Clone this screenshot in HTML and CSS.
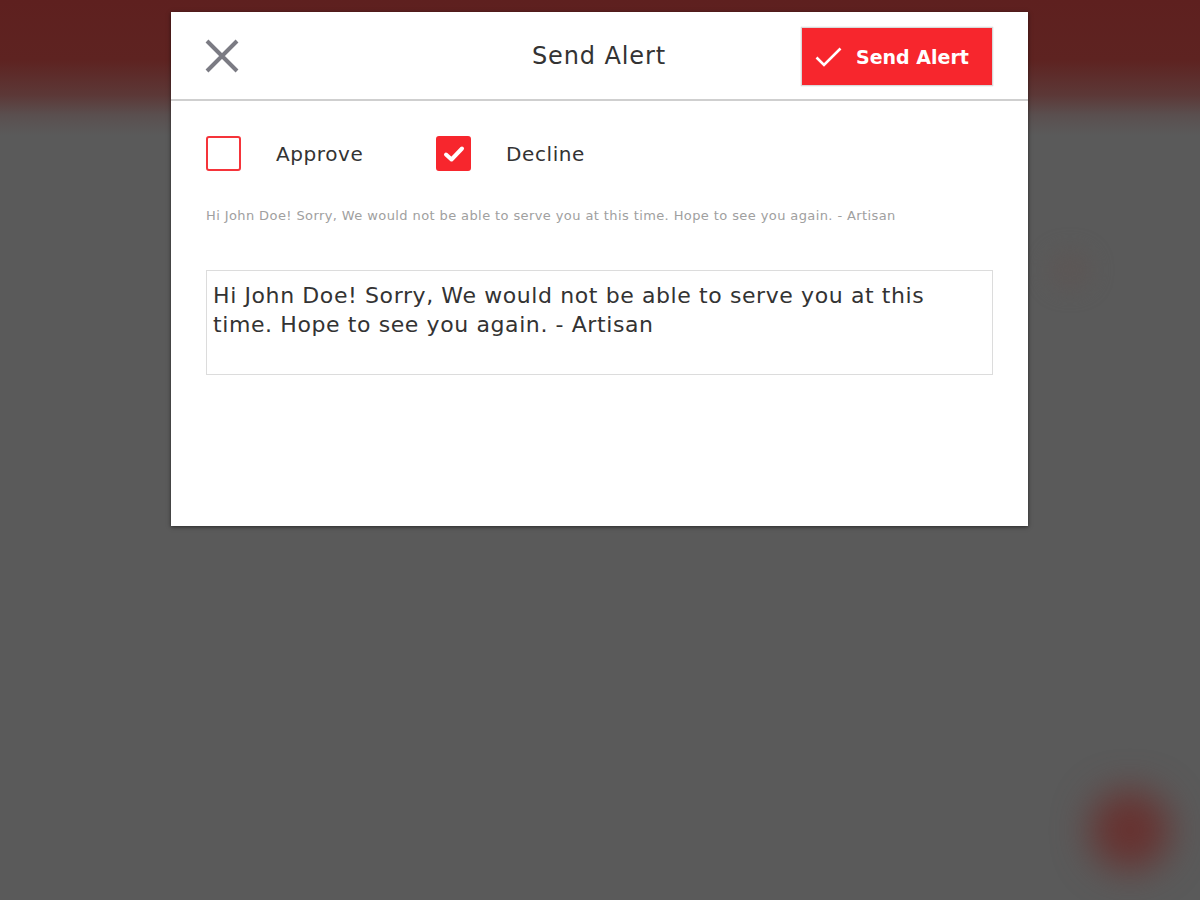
FILE: index.html
```html
<!DOCTYPE html>
<html>
<head>
<meta charset="utf-8">
<link rel="stylesheet" href="styles.css">
</head>
<body>
<div class="backdrop">
  <div class="blob blob-a"></div>
  <div class="blob blob-b"></div>
  <div class="modal">
    <div class="modal-header">
      <button class="close" aria-label="Close">
        <svg width="34" height="34" viewBox="0 0 34 34"><path d="M2 2 L32 32 M32 2 L2 32" stroke="#7b7b83" stroke-width="4" stroke-linecap="butt"/></svg>
      </button>
      <div class="title">Send Alert</div>
      <button class="send">
        <svg width="27" height="22" viewBox="0 0 27 22"><path d="M1.5 11.5 L9 19 L25.5 2.5" fill="none" stroke="#fff" stroke-width="2.6"/></svg>
        <span>Send Alert</span>
      </button>
    </div>
    <div class="modal-body">
      <div class="options">
        <label class="option">
          <span class="box"></span>
          <span class="opt-label">Approve</span>
        </label>
        <label class="option">
          <span class="box checked">
            <svg width="22" height="18" viewBox="0 0 22 18"><path d="M3 9.5 L8.5 14.5 L19 3.5" fill="none" stroke="#fff" stroke-width="4" stroke-linejoin="round" stroke-linecap="round"/></svg>
          </span>
          <span class="opt-label">Decline</span>
        </label>
      </div>
      <p class="preview">Hi John Doe! Sorry, We would not be able to serve you at this time. Hope to see you again. - Artisan</p>
      <div class="message">Hi John Doe! Sorry, We would not be able to serve you at this time. Hope to see you again. - Artisan</div>
    </div>
  </div>
</div>
</body>
</html>
```

FILE: styles.css
```css
* { box-sizing: border-box; }
html, body { margin: 0; padding: 0; }
body {
  font-family: "DejaVu Sans", "Open Sans", sans-serif;
  background: #5a5a5a;
}
.backdrop {
  position: relative;
  width: 1200px;
  height: 900px;
  overflow: hidden;
  padding-top: 12px;
  background: linear-gradient(180deg, #5e201f 0px, #5e2321 60px, #5c3837 95px, #5a4f4f 115px, #5a5a5a 135px, #5a5a5a 100%);
}
.blob {
  position: absolute;
  border-radius: 50%;
  filter: blur(18px);
}
.blob-a {
  left: 1090px; top: 790px; width: 80px; height: 80px;
  background: #673230;
}
.blob-b {
  left: 1048px; top: 250px; width: 44px; height: 40px;
  background: #5c5756;
  filter: blur(10px);
}
.modal {
  position: relative;
  width: 857px;
  height: 514px;
  margin-left: 171px;
  background: #fff;
  box-shadow: 0 1px 4px rgba(0,0,0,0.55);
}
.modal-header {
  height: 89px;
  border-bottom: 2px solid #cfcfcf;
  display: grid;
  grid-template-columns: 1fr auto 1fr;
  align-items: center;
  padding: 0 35px 0 34px;
}
.close {
  background: none;
  border: 0;
  padding: 0;
  width: 34px;
  height: 34px;
  display: flex;
  margin-top: 1px;
  justify-self: start;
}
.title {
  font-size: 24px;
  letter-spacing: 0.9px;
  color: #333;
}
.send {
  justify-self: end;
  width: 192px;
  height: 59px;
  background: #f7262d;
  border: 1px solid #d9d9d9;
  box-shadow: 0 0 1px rgba(0,0,0,0.25);
  color: #fff;
  font-family: inherit;
  font-size: 19px;
  font-weight: bold;
  display: flex;
  align-items: center;
  gap: 14px;
  padding: 0 0 0 13px;
  margin-top: 2px;
}
.modal-body {
  padding: 35px 35px 0 35px;
}
.options {
  display: flex;
  align-items: center;
}
.option {
  width: 230px;
  display: flex;
  align-items: center;
}
.box {
  width: 35px;
  height: 35px;
  border: 2px solid #f5343a;
  border-radius: 3px;
  display: flex;
  align-items: center;
  justify-content: center;
  flex: none;
}
.box.checked {
  background: #f7262d;
  border-color: #f7262d;
}
.opt-label {
  margin-left: 35px;
  font-size: 20px;
  letter-spacing: 0.6px;
  color: #333;
}
.preview {
  margin: 37px 0 0 0;
  font-size: 13px;
  letter-spacing: 0.4px;
  color: #a0a0a0;
  line-height: 16px;
}
.message {
  margin-top: 46px;
  height: 105px;
  border: 1px solid #dcdcdc;
  padding: 10px 40px 10px 6px;
  font-size: 22px;
  letter-spacing: 0.6px;
  line-height: 29px;
  color: #333;
}
```
